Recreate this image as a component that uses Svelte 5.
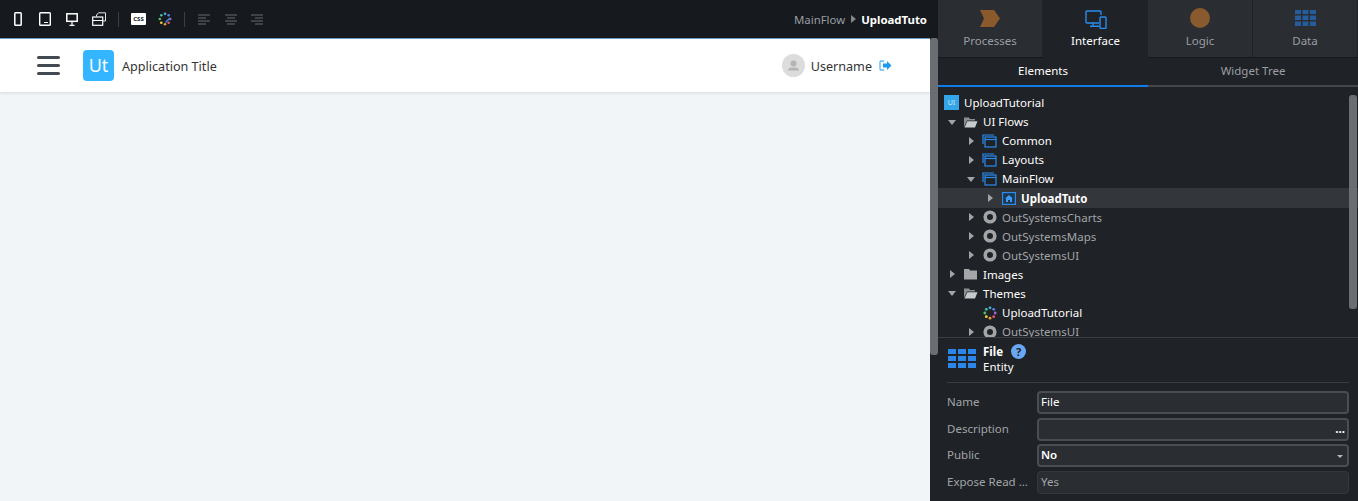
<script>
  const tabs = [
    { name: "Processes", icon: "chevron" },
    { name: "Interface", icon: "screens", active: true },
    { name: "Logic", icon: "circle" },
    { name: "Data", icon: "grid" },
  ];

  // indent is the tree level, open: true/false draws the arrow, undefined means none
  const tree = [
    { label: "UploadTutorial", indent: 0, icon: "app", root: true },
    { label: "UI Flows", indent: 0, icon: "folderOpen", open: true },
    { label: "Common", indent: 1, icon: "flow", open: false },
    { label: "Layouts", indent: 1, icon: "flow", open: false },
    { label: "MainFlow", indent: 1, icon: "flow", open: true },
    { label: "UploadTuto", indent: 2, icon: "screen", open: false, selected: true },
    { label: "OutSystemsCharts", indent: 1, icon: "module", open: false, muted: true },
    { label: "OutSystemsMaps", indent: 1, icon: "module", open: false, muted: true },
    { label: "OutSystemsUI", indent: 1, icon: "module", open: false, muted: true },
    { label: "Images", indent: 0, icon: "folder", open: false },
    { label: "Themes", indent: 0, icon: "folderOpen", open: true },
    { label: "UploadTutorial", indent: 1, icon: "theme" },
    { label: "OutSystemsUI", indent: 1, icon: "module", open: false, muted: true },
  ];

  const dotColors = ["#3fb6e8", "#5a7fe0", "#a565d8", "#e0566f", "#ef9a3c", "#f0d040", "#55c060", "#45c0a0"];
  const dots = dotColors.map((color, i) => {
    const a = (i / dotColors.length) * Math.PI * 2 - Math.PI / 2;
    return { color, x: 7 + Math.cos(a) * 5.2, y: 7 + Math.sin(a) * 5.2 };
  });
</script>

<div class="ide">
  <div class="canvas">
    <div class="toolbar">
      <div class="tools">
        <svg width="8" height="14" viewBox="0 0 8 14"><rect x=".8" y=".8" width="6.400" height="12.400" rx=".8" fill="none" stroke="#fff" stroke-width="1.500" /></svg>
        <svg class="tablet" width="12" height="14" viewBox="0 0 12 14"><rect x=".7" y=".7" width="10.600" height="12.600" rx=".8" fill="none" stroke="#fff" stroke-width="1.400" /><path d="M5 10.500h4" stroke="#fff" /></svg>
        <svg class="desk" width="12" height="13" viewBox="0 0 12 13"><rect x=".8" y=".8" width="10.400" height="7.500" fill="none" stroke="#fff" stroke-width="1.500" /><path d="M6 9v3M3.500 12.300h5" stroke="#fff" stroke-width="1.200" /></svg>
        <svg class="multi" width="14" height="14" viewBox="0 0 14 14"><path d="M4.500 4.500V3L6.500 .8h7V9H11" fill="none" stroke="#e6e6e6" /><rect x=".7" y="5" width="10" height="8.300" fill="none" stroke="#fff" stroke-width="1.200" /><path d="M1 8.500h10" stroke="#fff" /></svg>
        <span class="sep"></span>
        <span class="css">CSS</span>
        <svg class="palette" width="14" height="14" viewBox="0 0 14 14">
          {#each dots as d}<circle cx={d.x} cy={d.y} r="1.300" fill={d.color} />{/each}
          <path d="M7.500 10.500 12 6" stroke="#3a8ae0" stroke-width="1.400" />
        </svg>
        <span class="sep second"></span>
        <svg class="align" width="12" height="11" viewBox="0 0 12 11"><path d="M0 1h12M0 4h8M0 7h12M0 10h8" stroke="#666b70" /></svg>
        <svg class="align mid" width="12" height="11" viewBox="0 0 12 11"><path d="M0 1h12M2 4h8M0 7h12M2 10h8" stroke="#666b70" /></svg>
        <svg class="align mid" width="12" height="11" viewBox="0 0 12 11"><path d="M0 1h12M4 4h8M0 7h12M4 10h8" stroke="#666b70" /></svg>
      </div>
      <div class="crumbs">
        <span>MainFlow</span>
        <i class="crumb-arrow"></i>
        <b>UploadTuto</b>
      </div>
    </div>

    <div class="viewport">
      <div class="page">
        <header class="app-header">
          <div class="burger"><i></i><i></i><i></i></div>
          <div class="logo">Ut</div>
          <span class="app-title">Application Title</span>
          <div class="user">
            <svg class="avatar" width="23" height="23" viewBox="0 0 23 23">
              <circle cx="11.500" cy="11.500" r="11.500" fill="#dcdcdc" />
              <circle cx="11.500" cy="9.500" r="3" fill="#b4b4b4" />
              <path d="M6 16.500c0-2.500 3-3 5.500-3s5.500.5 5.500 3z" fill="#b4b4b4" />
            </svg>
            <span class="user-name">Username</span>
            <svg class="logout" width="13" height="11" viewBox="0 0 13 11">
              <path d="M5 1H2a1 1 0 0 0-1 1v7a1 1 0 0 0 1 1h3" fill="none" stroke="#57b6f5" stroke-width="1.300" />
              <path d="M4 3.500h4V1l4.500 4.500L8 10V7.500H4z" fill="#1e9bf0" />
            </svg>
          </div>
        </header>
      </div>
      <div class="scrollbar"><div class="thumb"></div></div>
    </div>
  </div>

  <aside class="panel">
    <nav class="tabs">
      {#each tabs as tab}
        <div class="tab" class:active={tab.active}>
          <div class="tab-icon">
            {#if tab.icon === "chevron"}
              <svg width="20" height="17" viewBox="0 0 20 17"><path d="M0 0h14l6 8.500-6 8.500H0l4-8.500z" fill="#8a5a2c" /></svg>
            {:else if tab.icon === "screens"}
              <svg width="22" height="19" viewBox="0 0 22 19" fill="none" stroke="#2a8cf0" stroke-width="1.400"><path d="M14 13H2a1 1 0 0 1-1-1V2a1 1 0 0 1 1-1h13a1 1 0 0 1 1 1v3" /><path d="M8 13v3M5 16.300h9" /><rect x="15" y="7" width="6" height="11.500" rx="1" /></svg>
            {:else if tab.icon === "circle"}
              <svg class="up" width="20" height="20" viewBox="0 0 20 20"><circle cx="10" cy="10" r="10" fill="#8a5a2f" /></svg>
            {:else}
              <svg width="21" height="16" viewBox="0 0 21 16"><path d="M0 0h6v4H0zM7.500 0h6v4h-6zM15 0h6v4h-6zM0 5.500h6v4.500H0zM7.500 5.500h6v4.500h-6zM15 5.500h6v4.500h-6zM0 11.500h6V16H0zM7.500 11.500h6V16h-6zM15 11.500h6V16h-6z" fill="#245c9c" /></svg>
            {/if}
          </div>
          <span>{tab.name}</span>
        </div>
      {/each}
    </nav>

    <div class="subtabs">
      <div class="subtab on">Elements</div>
      <div class="subtab">Widget Tree</div>
    </div>

    <div class="tree">
      {#each tree as row}
        <div class="row" class:selected={row.selected} class:muted={row.muted} style="padding-left: {row.root ? 6 : 10 + row.indent * 19}px">
          {#if !row.root}
            <span class="arrow" class:open={row.open === true} class:closed={row.open === false}></span>
          {/if}
          <span class="row-icon">
            {#if row.icon === "app"}
              <span class="app-icon">UI</span>
            {:else if row.icon === "folderOpen"}
              <svg width="15" height="12" viewBox="0 0 15 12"><path d="M1 11V1.500h5l1 1.500h5v1.500H4L1 11z" fill="#8c8f92" /><path d="M1.500 11.500 4.300 5.200H14.500L12 11.500z" fill="#c8c9ca" /></svg>
            {:else if row.icon === "folder"}
              <svg width="15" height="12" viewBox="0 0 15 12"><path d="M1 1h5l1 1.500h7V11.500H1z" fill="#a4a6a8" /></svg>
            {:else if row.icon === "flow"}
              <svg width="15" height="14" viewBox="0 0 15 14" fill="none" stroke="#2a8cf0" stroke-width="1.200"><path d="M1 10V1h11" /><rect x="3" y="3" width="11" height="10" /><path d="M3 5.500h11" /></svg>
            {:else if row.icon === "screen"}
              <svg width="14" height="13" viewBox="0 0 14 13"><rect x=".6" y=".6" width="12.800" height="11.800" fill="#20364f" stroke="#2a8cf0" stroke-width="1.200" /><path d="M7 3 3 6.500h1V10h2V8h2v2h2V6.500h1z" fill="#3a9cf5" /></svg>
            {:else if row.icon === "module"}
              <svg width="14" height="14" viewBox="0 0 14 14"><circle cx="7" cy="7" r="4.800" fill="none" stroke="#a2a4a6" stroke-width="3.600" /></svg>
            {:else}
              <svg width="14" height="14" viewBox="0 0 14 14">
                {#each dots as d}<circle cx={d.x} cy={d.y} r="1.400" fill={d.color} />{/each}
              </svg>
            {/if}
          </span>
          <span class="row-label">{row.label}</span>
        </div>
      {/each}
      <div class="tree-scroll"></div>
    </div>

    <section class="props">
      <div class="props-head">
        <svg width="28" height="22" viewBox="0 0 28 22"><path d="M0 1h8v5H0zM10 1h8v5h-8zM20 1h8v5h-8zM0 8h8v5H0zM10 8h8v5h-8zM20 8h8v5h-8zM0 15h8v5H0zM10 15h8v5h-8zM20 15h8v5h-8z" fill="#2a86e8" /></svg>
        <div class="props-title">
          <div class="title-line"><b>File</b><span class="help">?</span></div>
          <div>Entity</div>
        </div>
      </div>
      <div class="field">
        <label>Name</label>
        <div class="input">File</div>
      </div>
      <div class="field">
        <label>Description</label>
        <div class="input"><span class="dots">...</span></div>
      </div>
      <div class="field">
        <label>Public</label>
        <div class="input bold">No<i class="caret"></i></div>
      </div>
      <div class="field">
        <label>Expose Read ...</label>
        <div class="input off">Yes</div>
      </div>
    </section>
  </aside>
</div>

<style>
  :global(body) {
    margin: 0;
    background: #1f2226;
  }

  .ide {
    display: flex;
    width: 1358px;
    height: 501px;
    overflow: hidden;
    font-family: "Noto Sans", "Open Sans", sans-serif;
    font-size: 11.5px;
    color: #fff;
  }

  .canvas {
    width: 938px;
    flex: none;
    display: flex;
    flex-direction: column;
    background: #1f2226;
  }

  .toolbar {
    height: 38px;
    flex: none;
    background: #16191d;
    display: flex;
    align-items: center;
    justify-content: space-between;
    padding: 0 11px 0 14px;
    box-sizing: border-box;
  }

  .tools {
    display: flex;
    align-items: center;
  }

  .tablet { margin-left: 17px; }
  .desk { margin-left: 15px; }
  .multi { margin-left: 14px; }

  .sep {
    width: 1px;
    height: 15px;
    background: #3b3f44;
    margin: 0 12px 0 12px;
  }

  .sep.second { margin: 0 13px 0 12px; }

  .css {
    width: 15px;
    height: 12px;
    background: #fff;
    color: #16191d;
    font-size: 6px;
    font-weight: 700;
    line-height: 12px;
    text-align: center;
    border-radius: 1px;
  }

  .palette { margin-left: 12px; }
  .align.mid { margin-left: 14.500px; }

  .crumbs {
    display: flex;
    align-items: center;
    color: #9a9ea3;
    font-size: 11.4px;
  }

  .crumbs b {
    color: #fff;
    font-weight: 700;
  }

  .crumb-arrow {
    border-left: 5px solid #84888c;
    border-top: 4px solid transparent;
    border-bottom: 4px solid transparent;
    margin: 0 5px 0 6px;
  }

  .viewport {
    flex: 1;
    display: flex;
    min-height: 0;
  }

  .page {
    width: 930px;
    flex: none;
    background: #f2f5f8;
    border-top: 1px solid #6fa0c8;
    box-sizing: border-box;
  }

  .app-header {
    height: 53px;
    background: #fff;
    box-shadow: 0 1px 3px rgba(0, 0, 0, 0.12);
    display: flex;
    align-items: center;
    padding: 0 38px 0 37px;
    color: #333;
    font-size: 12.600px;
  }

  .app-title,
  .user-name {
    padding-top: 2px;
  }

  .burger {
    width: 23px;
    display: flex;
    flex-direction: column;
    gap: 5px;
    margin-right: 23px;
  }

  .burger i {
    display: block;
    height: 3px;
    border-radius: 2px;
    background: #424a52;
  }

  .logo {
    width: 31px;
    height: 31px;
    border-radius: 4px;
    background: #33b5ff;
    color: #fff;
    font-size: 18px;
    line-height: 30px;
    text-align: center;
    margin-right: 8px;
  }

  .user {
    margin-left: auto;
    display: flex;
    align-items: center;
  }

  .avatar { margin-right: 6px; }
  .logout { margin-left: 7px; }

  .scrollbar {
    width: 8px;
    flex: none;
    background: #1f2226;
  }

  .thumb {
    width: 8px;
    height: 317px;
    background: #6a6e73;
    border-radius: 3px;
  }

  .panel {
    width: 420px;
    flex: none;
    background: #1f2226;
    display: flex;
    flex-direction: column;
  }

  .tabs {
    display: grid;
    grid-template-columns: repeat(4, 105px);
    height: 58px;
    flex: none;
    background: #16191d;
  }

  .tab {
    height: 57px;
    box-sizing: border-box;
    background: #2a2d31;
    border-right: 1px solid #1f2226;
    display: flex;
    flex-direction: column;
    align-items: center;
    padding-top: 10px;
    color: #9a9ea3;
    line-height: 16px;
  }

  .tab.active {
    background: #1f2226;
    height: 58px;
    color: #fff;
    border-right: 0;
  }

  .tab-icon {
    height: 23px;
    display: flex;
    align-items: flex-start;
    justify-content: center;
  }

  .tab-icon .up { margin-top: -2px; }

  .subtabs {
    display: flex;
    height: 29px;
    flex: none;
    box-sizing: border-box;
  }

  .subtab {
    flex: 1;
    text-align: center;
    line-height: 26px;
    color: #9a9ea3;
    border-bottom: 2px solid #44474b;
  }

  .subtab.on {
    color: #fff;
    border-bottom-color: #0f7ce8;
  }

  .tree {
    position: relative;
    height: 251px;
    flex: none;
    padding-top: 6px;
    box-sizing: border-box;
    overflow: hidden;
    border-bottom: 1px solid #3a3d41;
  }

  .row {
    height: 19.100px;
    display: flex;
    align-items: center;
    line-height: 19px;
  }

  .row.selected {
    background: #33363a;
    font-weight: 700;
  }

  .row.muted { color: #a2a5a8; }

  .arrow {
    width: 9px;
    height: 8px;
    flex: none;
    margin-right: 6px;
    position: relative;
  }

  .arrow.closed::before {
    content: "";
    position: absolute;
    left: 2px;
    top: 0;
    border-left: 5px solid #a2a4a6;
    border-top: 4px solid transparent;
    border-bottom: 4px solid transparent;
  }

  .arrow.open::before {
    content: "";
    position: absolute;
    left: 0;
    top: 2px;
    border-top: 5px solid #a2a4a6;
    border-left: 4px solid transparent;
    border-right: 4px solid transparent;
  }

  .row-icon {
    width: 15px;
    height: 15px;
    flex: none;
    display: flex;
    align-items: center;
    justify-content: center;
    margin-right: 5px;
  }

  .app-icon {
    width: 15px;
    height: 15px;
    background: #33a5e8;
    font-size: 7px;
    line-height: 15px;
    text-align: center;
    color: #cfe9fa;
  }

  .tree-scroll {
    position: absolute;
    top: 8px;
    right: 1px;
    width: 8px;
    height: 214px;
    background: #6a6e73;
    border-radius: 3px;
  }

  .props {
    flex: 1;
    padding: 0 9px 0 9px;
  }

  .props-head {
    display: flex;
    align-items: center;
    gap: 7px;
    height: 42px;
    padding-bottom: 2px;
    padding-left: 1px;
    border-bottom: 1px solid #3a3d41;
    margin-bottom: 6px;
    line-height: 15px;
  }

  .title-line {
    display: flex;
    align-items: center;
    gap: 8px;
  }

  .help {
    width: 15px;
    height: 15px;
    border-radius: 50%;
    background: #69a8f5;
    color: #1f2226;
    font-size: 11px;
    font-weight: 700;
    line-height: 15px;
    text-align: center;
  }

  .field {
    display: flex;
    align-items: center;
    height: 26.700px;
  }

  .field label {
    width: 90px;
    flex: none;
    color: #a2a5a8;
    white-space: nowrap;
    margin-bottom: 2px;
  }

  .input {
    flex: 1;
    height: 23px;
    box-sizing: border-box;
    border: 2px solid #4a4d51;
    border-radius: 4px;
    background: #2a2d31;
    padding: 0 2px;
    line-height: 17px;
    position: relative;
  }

  .input.bold { font-weight: 600; line-height: 18px; }

  .input.off {
    border-width: 1px;
    border-color: #34373b;
    padding: 0 3px;
    line-height: 20px;
    color: #a2a5a8;
  }

  .dots {
    position: absolute;
    right: 2px;
    top: 0;
    font-weight: 700;
    line-height: 17px;
  }

  .caret {
    position: absolute;
    right: 4px;
    top: 9px;
    border-top: 3px solid #b4b6b8;
    border-left: 3px solid transparent;
    border-right: 3px solid transparent;
  }
</style>
